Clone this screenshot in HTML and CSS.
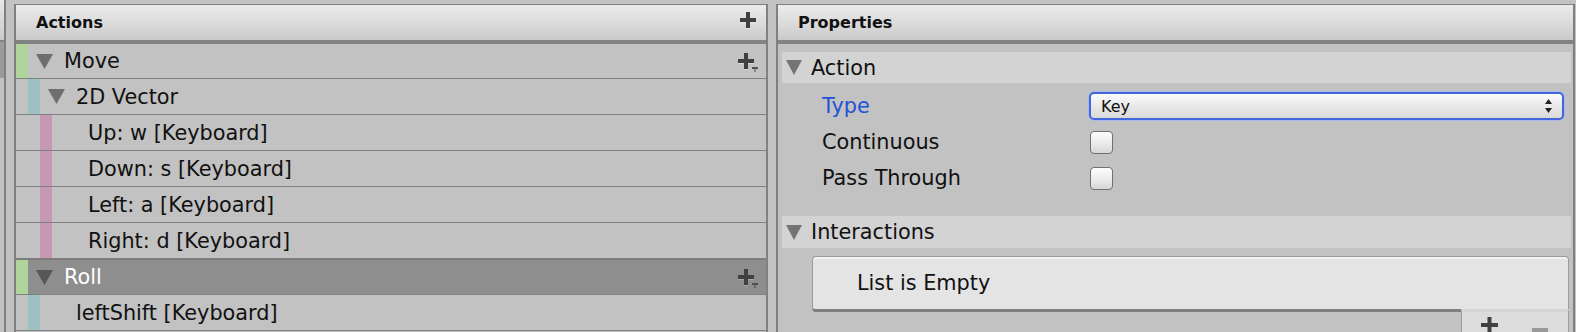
FILE: index.html
```html
<!DOCTYPE html>
<html lang="en">
<head>
    <meta charset="UTF-8">
    <title>Input Actions</title>
    <link rel="stylesheet" href="styles.css">
</head>
<body>

<div class="editor">
    <div class="stub">
        <div class="stub-head"></div>
        <div class="stub-sel"></div>
    </div>

    <div class="panel actions">
        <div class="panel-head">
            <span class="panel-title">Actions</span>
            <svg class="plus" width="16" height="17" viewBox="0 0 16 17">
                <rect x="0" y="10" width="16" height="1" fill="#e8e8e8"/>
                <rect x="6" y="16" width="4" height="1" fill="#e8e8e8"/>
                <rect x="0" y="6" width="16" height="4" fill="#404040"/>
                <rect x="6" y="0" width="4" height="16" fill="#404040"/>
            </svg>
        </div>

        <div class="row first">
            <span class="bar green"></span>
            <svg class="tri" width="17" height="15" viewBox="0 0 17 15"><polygon points="0,0 17,0 8.5,15" fill="#6e6e6e"/></svg>
            <span class="name">Move</span>
            <span class="add">
                <svg width="20" height="20" viewBox="0 0 20 20">
                    <rect x="0" y="10" width="16" height="1" fill="#d6d6d6"/>
                    <rect x="6" y="16" width="4" height="1" fill="#d6d6d6"/>
                    <rect x="0" y="6" width="16" height="4" fill="#404040"/>
                    <rect x="6" y="0" width="4" height="16" fill="#404040"/>
                    <rect x="14" y="14" width="6" height="2" fill="#505050"/>
                    <rect x="16" y="16" width="2" height="3" fill="#8a8a8a"/>
                </svg>
            </span>
        </div>

        <div class="row d1">
            <span class="bar teal"></span>
            <svg class="tri" width="17" height="15" viewBox="0 0 17 15"><polygon points="0,0 17,0 8.5,15" fill="#6e6e6e"/></svg>
            <span class="name">2D Vector</span>
        </div>

        <div class="row d2">
            <span class="bar pink"></span>
            <span class="name leaf">Up: w [Keyboard]</span>
        </div>
        <div class="row d2">
            <span class="bar pink"></span>
            <span class="name leaf">Down: s [Keyboard]</span>
        </div>
        <div class="row d2">
            <span class="bar pink"></span>
            <span class="name leaf">Left: a [Keyboard]</span>
        </div>
        <div class="row d2">
            <span class="bar pink"></span>
            <span class="name leaf">Right: d [Keyboard]</span>
        </div>

        <div class="row selected">
            <span class="bar green"></span>
            <svg class="tri" width="17" height="15" viewBox="0 0 17 15"><polygon points="0,0 17,0 8.5,15" fill="#575757"/></svg>
            <span class="name">Roll</span>
            <span class="add">
                <svg width="20" height="20" viewBox="0 0 20 20">
                    <rect x="0" y="10" width="16" height="1" fill="#a8a8a8"/>
                    <rect x="6" y="16" width="4" height="1" fill="#a8a8a8"/>
                    <rect x="0" y="6" width="16" height="4" fill="#404040"/>
                    <rect x="6" y="0" width="4" height="16" fill="#404040"/>
                    <rect x="14" y="14" width="6" height="2" fill="#505050"/>
                    <rect x="16" y="16" width="2" height="3" fill="#6a6a6a"/>
                </svg>
            </span>
        </div>

        <div class="row d1">
            <span class="bar teal"></span>
            <span class="name leaf">leftShift [Keyboard]</span>
        </div>
    </div>

    <div class="panel properties">
        <div class="panel-head">
            <span class="panel-title">Properties</span>
        </div>

        <div class="props">
            <div class="section-head">
                <svg class="fold" width="16" height="15" viewBox="0 0 16 15"><polygon points="0,0 16,0 8,15" fill="#747474"/></svg>
                <span>Action</span>
            </div>

            <div class="field">
                <span class="label focus">Type</span>
                <div class="dropdown">
                    <span>Key</span>
                    <svg width="7" height="14" viewBox="0 0 7 14">
                        <polygon points="3.5,0 7,5 0,5" fill="#222"/>
                        <polygon points="0,9 7,9 3.5,14" fill="#222"/>
                    </svg>
                </div>
            </div>
            <div class="field">
                <span class="label">Continuous</span>
                <span class="check"></span>
            </div>
            <div class="field">
                <span class="label">Pass Through</span>
                <span class="check"></span>
            </div>

            <div class="section-head interactions">
                <svg class="fold" width="16" height="15" viewBox="0 0 16 15"><polygon points="0,0 16,0 8,15" fill="#747474"/></svg>
                <span>Interactions</span>
            </div>

            <div class="list-box">List is Empty</div>
            <div class="list-footer">
                <div class="footer-tab">
                    <svg width="17" height="17" viewBox="0 0 17 17">
                        <rect x="0" y="6" width="17" height="4" fill="#404040"/>
                        <rect x="6.5" y="0" width="4" height="17" fill="#404040"/>
                    </svg>
                    <span class="minus"></span>
                </div>
            </div>
        </div>
    </div>
</div>

</body>
</html>
```

FILE: styles.css
```css
body {
    margin: 0;
    width: 1576px;
    height: 332px;
    overflow: hidden;
    background-color: #c2c2c2;
    font-family: "DejaVu Sans", sans-serif;
    color: #111;
}
.editor {
    display: flex;
    height: 332px;
}
.stub {
    width: 4px;
    border-right: 2px solid #808080;
}
.stub-head {
    height: 40px;
    border-bottom: 2px solid #858585;
    background: linear-gradient(#e6e6e6, #cbcbcb);
}
.stub-sel {
    height: 36px;
    background-color: #9b9b9b;
}
.panel {
    box-sizing: border-box;
    margin-top: 4px;
    margin-left: 8px;
    border: 2px solid #808080;
    border-top-width: 1px;
    border-bottom: none;
}
.actions {
    width: 754px;
}
.properties {
    width: 799px;
}
.panel-head {
    height: 35px;
    border-bottom: 4px solid #828282;
    background: linear-gradient(#ebebeb, #dcdcdc 50%, #c9c9c9);
    display: flex;
    align-items: center;
    padding: 0 10px 0 20px;
}
.panel-title {
    flex: 1;
    font-size: 16px;
    font-weight: bold;
    color: #111;
}
.plus {
    margin-top: -4px;
}
.row {
    height: 35px;
    border-bottom: 1px solid #808080;
    display: flex;
    align-items: center;
    font-size: 20.8px;
}
.row.first {
    height: 34px;
}
.row.d1 {
    padding-left: 12px;
}
.row.d2 {
    padding-left: 24px;
}
.row.selected {
    background-color: #8e8e8e;
    color: #fff;
    height: 34px;
    border-top: 1px solid #7a7a7a;
}
.bar {
    width: 12px;
    align-self: stretch;
}
.green {
    background-color: #b1d49d;
}
.teal {
    background-color: #9dc1c3;
}
.pink {
    background-color: #c597b2;
}
.tri {
    margin-left: 8px;
}
.name {
    flex: 1;
    margin-left: 11px;
}
.name.leaf {
    margin-left: 36px;
}
.add {
    width: 20px;
    height: 20px;
    margin-right: 8px;
    margin-top: 3px;
}
.props {
    padding: 8px 2px 0 4px;
}
.section-head {
    height: 31px;
    background-color: #d3d3d3;
    display: flex;
    align-items: center;
    font-size: 20.8px;
}
.section-head.interactions {
    margin-top: 20px;
    height: 32px;
}
.fold {
    margin-left: 4px;
    margin-right: 9px;
}
.field {
    height: 36px;
    display: flex;
    align-items: center;
    padding-left: 40px;
    font-size: 20.8px;
}
.section-head + .field {
    margin-top: 5px;
}
.label {
    width: 267px;
}
.label.focus {
    color: #2253d8;
}
.dropdown {
    box-sizing: border-box;
    width: 475px;
    height: 28px;
    border: 2px solid #4466dd;
    border-radius: 5px;
    box-shadow: 0 0 0 1px #a9b8ec;
    background: linear-gradient(#fbfbfb, #e6e6e6 60%, #dadada);
    display: flex;
    align-items: center;
    justify-content: space-between;
    padding: 0 10px 0 10px;
    font-size: 16px;
    color: #111;
}
.check {
    box-sizing: border-box;
    width: 23px;
    height: 23px;
    margin-left: 1px;
    border: 1.5px solid #707070;
    border-radius: 4px;
    background: linear-gradient(#fdfdfd, #e9e9e9 60%, #d6d6d6);
}
.list-box {
    box-sizing: border-box;
    height: 56px;
    margin: 8px 2px 0 30px;
    padding-left: 44px;
    border: 1px solid #9c9c9c;
    border-bottom: 3px solid #7e7e7e;
    border-radius: 4px 4px 0 4px;
    box-shadow: inset 0 2px 0 #f2f2f2;
    background-color: #e4e4e4;
    display: flex;
    align-items: center;
    font-size: 20.8px;
}
.list-footer {
    display: flex;
    justify-content: flex-end;
    margin: -3px 2px 0 0;
}
.footer-tab {
    width: 108px;
    height: 30px;
    box-sizing: border-box;
    border: 1px solid #9c9c9c;
    border-top: 3px solid #d6d6d6;
    background-color: #dcdcdc;
    display: flex;
    align-items: flex-start;
    padding: 5px 0 0 19px;
}
.minus {
    width: 16px;
    height: 4px;
    margin: 11px 0 0 34px;
    background-color: #9a9a9a;
}
```
